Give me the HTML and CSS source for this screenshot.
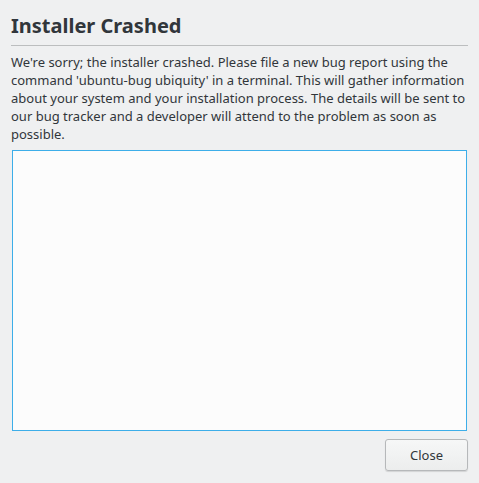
FILE: index.html
```html
<!DOCTYPE html>
<html>
<head>
<meta charset="utf-8">
<link rel="stylesheet" href="styles.css">
</head>
<body>
<div class="dialog">
  <h1 class="title">Installer Crashed</h1>
  <div class="sep"></div>
  <p class="msg">We're sorry; the installer crashed. Please file a new bug report using the command 'ubuntu-bug ubiquity' in a terminal. This will gather information about your system and your installation process. The details will be sent to our bug tracker and a developer will attend to the problem as soon as possible.</p>
  <div class="log"></div>
  <div class="buttons"><button class="btn">Close</button></div>
</div>
</body>
</html>
```
FILE: styles.css
```css
html, body {
  margin: 0;
  padding: 0;
  background: #eff0f1;
  width: 479px;
  height: 483px;
  overflow: hidden;
}
.dialog {
  font-family: "Noto Sans", sans-serif;
  color: #31363b;
  padding: 11px 11px 0 11px;
  display: flex;
  flex-direction: column;
}
.title {
  margin: 0;
  font-size: 20px;
  font-weight: bold;
  line-height: 28px;
  height: 28px;
  padding-top: 1px;
}
.sep {
  height: 1px;
  background: #bcbebf;
  margin: 5px 0 0 0;
  width: 457px;
}
.msg {
  margin: 7px 0 0 0;
  font-size: 13px;
  line-height: 18px;
  width: 460px;
}
.log {
  margin: 7px 0 0 1px;
  width: 453px;
  height: 279px;
  background: #fcfcfc;
  border: 1px solid #3daee9;
}
.buttons {
  display: flex;
  justify-content: flex-end;
  margin-top: 8px;
  width: 457px;
}
.btn {
  font-family: "Noto Sans", sans-serif;
  font-size: 13px;
  color: #31363b;
  width: 83px;
  height: 32px;
  border: 1px solid #b6b8ba;
  border-radius: 3px;
  background: linear-gradient(#f6f7f7, #eceded);
  box-shadow: 0 1px 1px rgba(0,0,0,0.12);
  padding: 0;
}
```
